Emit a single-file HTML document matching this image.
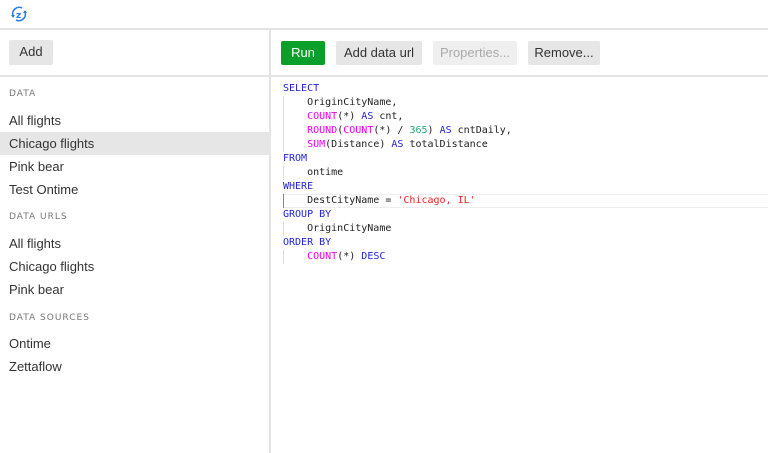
<!DOCTYPE html>
<html><head><style>
body{margin:0;width:768px;height:453px;background:#fff;font-family:"Liberation Sans","DejaVu Sans",sans-serif;color:#333;position:relative;overflow:hidden}
.abs{position:absolute}
.btn{position:absolute;top:41px;height:24px;border-radius:2px;background:#e6e6e6;font-size:13px;line-height:24px;text-align:center;color:#333}
.lab{position:absolute;left:9px;font-size:9px;letter-spacing:1px;color:#777;font-family:"DejaVu Sans",sans-serif}
.it{position:absolute;left:0;width:270px;height:23px;line-height:23px;padding-left:9px;box-sizing:border-box;font-size:13px;color:#333}
.code{position:absolute;left:283px;top:82px;font-family:"DejaVu Sans Mono","Liberation Mono",monospace;font-size:10px;line-height:14px;white-space:pre;color:#222}
.k{color:#22d}.f{color:#e0e}.n{color:#2a7}.s{color:#e22}
.g{position:absolute;left:283px;width:1px;background:#ddd}
</style></head><body>
<svg class="abs" style="left:9px;top:5px" width="20" height="18" viewBox="0 0 20 18">
<path d="M4 11 A6.5 6.5 0 0 1 13 3" fill="none" stroke="#2a7de1" stroke-width="1.6"/>
<path d="M16 7 A6.5 6.5 0 0 1 7 15" fill="none" stroke="#2a7de1" stroke-width="1.6"/>
<path d="M2 10 L4 13 L6 10Z M14 8 L16 5 L18 8Z" fill="#2a7de1"/>
<text x="7" y="13" font-size="9" font-weight="bold" fill="#2a7de1" font-family="DejaVu Sans">z</text>
</svg>
<div class="abs" style="left:0;top:28px;width:768px;height:2px;background:#e4e4e4"></div>
<div class="abs" style="left:269px;top:30px;width:2px;height:423px;background:#e4e4e4"></div>
<div class="abs" style="left:0;top:75px;width:768px;height:2px;background:#e4e4e4"></div>
<div class="btn" style="left:9px;top:40px;width:44px;height:25px">Add</div>
<div class="btn" style="left:281px;width:44px;background:#0a9e2a;color:#fff">Run</div>
<div class="btn" style="left:336px;width:86px">Add data url</div>
<div class="btn" style="left:433px;width:84px;background:#efefef;color:#aaa">Properties...</div>
<div class="btn" style="left:528px;width:72px">Remove...</div>
<div class="lab" style="top:89px">DATA</div>
<div class="it" style="top:109px">All flights</div>
<div class="it" style="top:132px;background:#e6e6e6">Chicago flights</div>
<div class="it" style="top:155px">Pink bear</div>
<div class="it" style="top:178px">Test Ontime</div>
<div class="lab" style="top:212px">DATA URLS</div>
<div class="it" style="top:232px">All flights</div>
<div class="it" style="top:255px">Chicago flights</div>
<div class="it" style="top:278px">Pink bear</div>
<div class="lab" style="top:313px">DATA SOURCES</div>
<div class="it" style="top:332px">Ontime</div>
<div class="it" style="top:355px">Zettaflow</div>
<div class="g" style="top:96px;height:56px"></div>
<div class="g" style="top:166px;height:14px"></div>
<div class="g" style="top:194px;height:14px;background:#888"></div>
<div class="abs" style="left:284px;top:194px;width:484px;height:14px;border-top:1px solid #eee;border-bottom:1px solid #eee;box-sizing:border-box"></div>
<div class="g" style="top:222px;height:14px"></div>
<div class="g" style="top:250px;height:14px"></div>
<div class="code"><span class="k">SELECT</span>
    OriginCityName,
    <span class="f">COUNT</span>(*) <span class="k">AS</span> cnt,
    <span class="f">ROUND</span>(<span class="f">COUNT</span>(*) / <span class="n">365</span>) <span class="k">AS</span> cntDaily,
    <span class="f">SUM</span>(Distance) <span class="k">AS</span> totalDistance
<span class="k">FROM</span>
    ontime
<span class="k">WHERE</span>
    DestCityName = <span class="s">'Chicago, IL'</span>
<span class="k">GROUP BY</span>
    OriginCityName
<span class="k">ORDER BY</span>
    <span class="f">COUNT</span>(*) <span class="k">DESC</span></div>
</body></html>
